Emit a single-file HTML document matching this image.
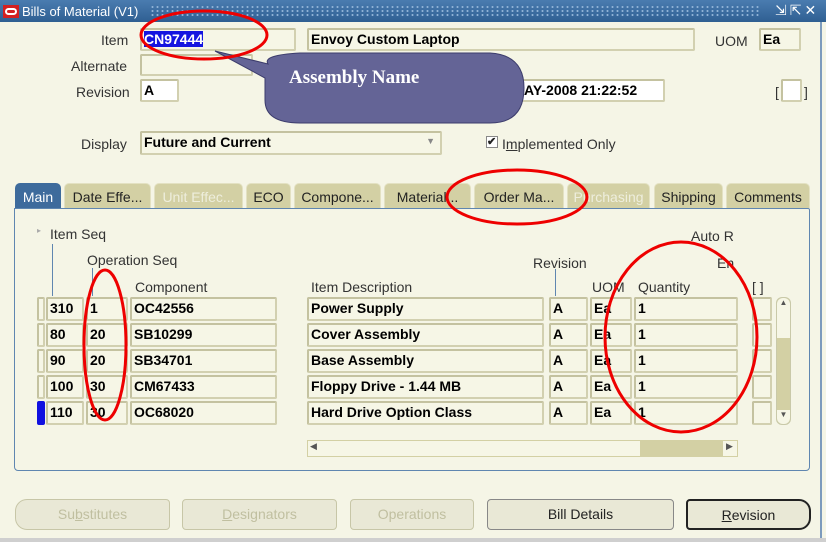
<!DOCTYPE html>
<html><head><style>
*{box-sizing:border-box;margin:0;padding:0}
body{width:826px;height:542px;background:#f5f5e6;font-family:"Liberation Sans",Arial,sans-serif;font-size:14px;color:#222;position:relative;overflow:hidden}
.a{position:absolute}
.f{position:absolute;background:#f6f6e6;border:2px solid #d2d0b0;border-top-color:#c4c2a0;border-left-color:#c4c2a0;border-radius:2px;font-weight:bold;font-size:14px;padding:1px 2px;line-height:17px;color:#000}
.w{background:#fff}
.l{position:absolute;font-size:14px;color:#333}
.tab{position:absolute;top:183px;height:25px;background:#d3d0a4;border-radius:5px 5px 0 0;font-size:14px;color:#222;text-align:center;line-height:26px;border:1px solid #e3e1c2;border-bottom:none}
.dis{color:#eeeedd}
.btn{position:absolute;top:499px;height:31px;background:#e9e8d6;border:1px solid #c7c6a7;border-radius:4px;font-size:14px;text-align:center;line-height:29px;color:#c0bfa0}
</style></head><body>
<div class="a" style="left:0;top:0;width:826px;height:22px;background:linear-gradient(#4a7cb0,#2f5f92);"></div>
<div class="a" style="left:150px;top:5px;width:610px;height:12px;background-image:radial-gradient(#8fb2d6 1px,transparent 1.3px);background-size:5px 4px;"></div>
<div class="a" style="left:3px;top:5px;width:16px;height:13px;background:#d42020;"></div>
<div class="a" style="left:5px;top:8px;width:12px;height:7px;border:2px solid #fff;border-radius:4px;"></div>
<div class="a" style="left:22px;top:4px;color:#fff;font-size:13px;">Bills of Material (V1)</div>
<div class="a" style="left:775px;top:2px;color:#fff;font-size:14px;letter-spacing:3px;">⇲⇱✕</div>
<div class="a" style="left:820px;top:22px;width:2px;height:520px;background:#7d9bbd"></div>
<div class="a" style="left:0;top:538px;width:826px;height:4px;background:#cfcfcf"></div>

<div class="l" style="left:101px;top:32px">Item</div>
<div class="f" style="left:140px;top:28px;width:156px;height:23px"><span style="background:#1515e0;color:#fff">CN97444</span></div>
<div class="f" style="left:307px;top:28px;width:388px;height:23px">Envoy Custom Laptop</div>
<div class="l" style="left:715px;top:33px">UOM</div>
<div class="f" style="left:759px;top:28px;width:42px;height:23px">Ea</div>
<div class="l" style="left:71px;top:58px">Alternate</div>
<div class="f" style="left:140px;top:54px;width:113px;height:22px"></div>
<div class="l" style="left:76px;top:84px">Revision</div>
<div class="f w" style="left:140px;top:79px;width:39px;height:23px">A</div>
<div class="f w" style="left:520px;top:79px;width:145px;height:23px">AY-2008 21:22:52</div>
<div class="l" style="left:775px;top:84px">[</div>
<div class="f w" style="left:781px;top:79px;width:21px;height:23px"></div>
<div class="l" style="left:804px;top:84px">]</div>
<div class="l" style="left:81px;top:136px">Display</div>
<div class="f" style="left:140px;top:131px;width:302px;height:24px">Future and Current<span style="position:absolute;right:5px;top:0;color:#888;font-size:9px">▼</span></div>
<div class="a" style="left:486px;top:136px;width:12px;height:12px;border:1px solid #888;background:#fff;font-size:11px;line-height:10px;font-weight:bold">✔</div>
<div class="l" style="left:502px;top:136px">I<u>m</u>plemented Only</div>

<svg class="a" style="left:0;top:0" width="826" height="542">
<path d="M215,51 L268,64 Q262,55 300,53 L490,53 Q524,55 524,88 Q524,123 490,123 L300,123 Q265,123 265,100 L265,78 Z" fill="#646496" stroke="#3c3c6c" stroke-width="1"/>
<text x="289" y="83" fill="#fff" font-family="Liberation Serif,serif" font-weight="bold" font-size="19">Assembly Name</text>
</svg>

<div class="tab" style="left:15px;width:46px;background:#3e6b9c;color:#fff;border-color:#3e6b9c">Main</div>
<div class="tab" style="left:64px;width:87px">Date Effe...</div>
<div class="tab dis" style="left:154px;width:89px">Unit Effec...</div>
<div class="tab" style="left:246px;width:45px">ECO</div>
<div class="tab" style="left:294px;width:87px">Compone...</div>
<div class="tab" style="left:384px;width:87px">Material...</div>
<div class="tab" style="left:474px;width:90px">Order Ma...</div>
<div class="tab dis" style="left:567px;width:83px">Purchasing</div>
<div class="tab" style="left:654px;width:69px">Shipping</div>
<div class="tab" style="left:726px;width:84px">Comments</div>
<div class="a" style="left:14px;top:208px;width:796px;height:263px;border:1px solid #5f86b0;border-radius:0 2px 4px 4px"></div>

<div class="l" style="left:37px;top:226px;font-size:8px;color:#aaa">▸</div>
<div class="l" style="left:50px;top:226px">Item Seq</div>
<div class="a" style="left:52px;top:244px;width:1px;height:52px;background:#5f86b0"></div>
<div class="l" style="left:87px;top:252px">Operation Seq</div>
<div class="a" style="left:92px;top:268px;width:1px;height:28px;background:#5f86b0"></div>
<div class="l" style="left:135px;top:279px">Component</div>
<div class="l" style="left:311px;top:279px">Item Description</div>
<div class="l" style="left:533px;top:255px">Revision</div>
<div class="a" style="left:555px;top:269px;width:1px;height:27px;background:#5f86b0"></div>
<div class="l" style="left:592px;top:279px">UOM</div>
<div class="l" style="left:638px;top:279px">Quantity</div>
<div class="l" style="left:691px;top:228px">Auto R</div>
<div class="l" style="left:717px;top:255px">En</div>
<div class="l" style="left:752px;top:279px">[ ]</div>

<div id="rows"></div>
<script>
var d=[["310","1","OC42556","Power Supply"],["80","20","SB10299","Cover Assembly"],["90","20","SB34701","Base Assembly"],["100","30","CM67433","Floppy Drive - 1.44 MB"],["110","30","OC68020","Hard Drive Option Class"]];
var h="",ys=[297,323,349,375,401];
d.forEach(function(r,i){var y=ys[i];
h+='<div class="f" style="left:37px;top:'+y+'px;width:7px;height:24px;'+(i==4?'background:#1010e0;border-color:#1010e0':'')+'"></div>';
h+='<div class="f" style="left:46px;top:'+y+'px;width:38px;height:24px">'+r[0]+'</div>';
h+='<div class="f" style="left:86px;top:'+y+'px;width:42px;height:24px">'+r[1]+'</div>';
h+='<div class="f" style="left:130px;top:'+y+'px;width:147px;height:24px">'+r[2]+'</div>';
h+='<div class="f" style="left:307px;top:'+y+'px;width:237px;height:24px">'+r[3]+'</div>';
h+='<div class="f" style="left:549px;top:'+y+'px;width:39px;height:24px">A</div>';
h+='<div class="f" style="left:590px;top:'+y+'px;width:42px;height:24px">Ea</div>';
h+='<div class="f" style="left:634px;top:'+y+'px;width:104px;height:24px">1</div>';
h+='<div class="f" style="left:752px;top:'+y+'px;width:20px;height:24px"></div>';});
document.getElementById("rows").innerHTML=h;
</script>
<div class="a" style="left:776px;top:297px;width:15px;height:128px;background:#d3d0a4;border:1px solid #c9c9a9;border-radius:6px"></div>
<div class="a" style="left:777px;top:298px;width:13px;height:40px;background:#f6f6e6;border-radius:6px 6px 0 0;font-size:8px;text-align:center;color:#555">▲</div>
<div class="a" style="left:777px;top:410px;width:13px;height:14px;background:#f6f6e6;border-radius:0 0 6px 6px;font-size:8px;text-align:center;color:#555">▼</div>
<div class="a" style="left:307px;top:440px;width:431px;height:17px;background:#f6f6e6;border:1px solid #d3d0a4"></div>
<div class="a" style="left:640px;top:441px;width:83px;height:15px;background:#d3d0a4"></div>
<div class="a" style="left:310px;top:441px;font-size:9px;color:#555">◀</div>
<div class="a" style="left:726px;top:441px;font-size:9px;color:#555">▶</div>

<svg class="a" style="left:0;top:0" width="826" height="542">
<g fill="none" stroke="#ee0000" stroke-width="3">
<ellipse cx="204" cy="35" rx="63" ry="24"/>
<ellipse cx="517" cy="197" rx="70" ry="27"/>
<ellipse cx="105" cy="345" rx="21" ry="75"/>
<ellipse cx="681" cy="337" rx="76" ry="95"/>
</g></svg>

<div class="btn" style="left:15px;width:155px;border-radius:12px 4px 4px 12px">Su<u>b</u>stitutes</div>
<div class="btn" style="left:182px;width:155px"><u>D</u>esignators</div>
<div class="btn" style="left:350px;width:124px">Operations</div>
<div class="btn" style="left:487px;width:187px;color:#222;border-color:#888">Bill Details</div>
<div class="btn" style="left:686px;width:125px;color:#222;border:2px solid #222;border-radius:4px 12px 12px 4px"><u>R</u>evision</div>
</body></html>
